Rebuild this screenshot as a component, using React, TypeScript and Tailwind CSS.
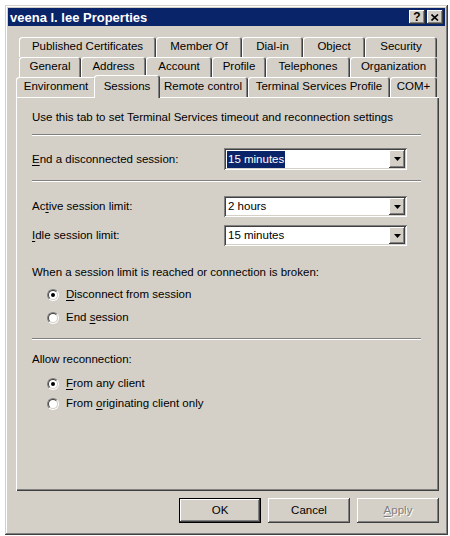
import React from 'react';

const raised =
  'shadow-[inset_-1px_-1px_#404040,inset_1px_1px_#ffffff,inset_-2px_-2px_#808080,inset_2px_2px_#d4d0c8]';
const sunken =
  'shadow-[inset_1px_1px_#808080,inset_-1px_-1px_#ffffff,inset_2px_2px_#404040,inset_-2px_-2px_#d4d0c8]';

interface TabDef {
  label: string;
  width: number;
  cls: string;
}

const row1: TabDef[] = [
  { label: 'Published Certificates', width: 137, cls: 'w-[137px]' },
  { label: 'Member Of', width: 86, cls: 'w-[86px]' },
  { label: 'Dial-in', width: 61, cls: 'w-[61px]' },
  { label: 'Object', width: 62, cls: 'w-[62px]' },
  { label: 'Security', width: 72, cls: 'w-[72px]' },
];

const row2: TabDef[] = [
  { label: 'General', width: 62, cls: 'w-[62px]' },
  { label: 'Address', width: 65, cls: 'w-[65px]' },
  { label: 'Account', width: 66, cls: 'w-[66px]' },
  { label: 'Profile', width: 54, cls: 'w-[54px]' },
  { label: 'Telephones', width: 84, cls: 'w-[84px]' },
  { label: 'Organization', width: 87, cls: 'w-[87px]' },
];

const Tab: React.FC<{ tab: TabDef }> = ({ tab }) => (
  <div
    className={`${tab.cls} h-[20px] flex items-center justify-center rounded-t-[3px] shadow-[inset_1px_1px_#ffffff,inset_-1px_0_#404040,inset_-2px_0_#808080] whitespace-nowrap`}
  >
    {tab.label}
  </div>
);

const Arrow = () => (
  <svg width="7" height="4" viewBox="0 0 7 4">
    <path d="M0 0h7L3.5 4z" fill="#000" />
  </svg>
);

const Combo: React.FC<{ value: string; selected?: boolean; h: string }> = ({ value, selected, h }) => (
  <div className={`w-[183px] ${h} bg-white ${sunken} flex items-center p-[2px]`}>
    <div className="flex-1 pl-[1px] flex items-center">
      <span className={selected ? 'bg-[#0a246a] text-white px-[1px] leading-[17px]' : 'px-[1px]'}>{value}</span>
    </div>
    <div className={`w-[16px] h-full bg-[#d4d0c8] ${raised} flex items-center justify-center`}>
      <Arrow />
    </div>
  </div>
);

const Radio: React.FC<{ checked?: boolean; children: React.ReactNode; mt: string }> = ({ checked, children, mt }) => (
  <div className={`flex items-center h-[16px] ${mt} pl-[15px]`}>
    <div className="w-[12px] h-[12px] rounded-full border border-t-[#808080] border-l-[#808080] border-b-white border-r-white">
      <div className="w-full h-full rounded-full border border-t-[#404040] border-l-[#404040] border-b-[#d4d0c8] border-r-[#d4d0c8] bg-white flex items-center justify-center">
        {checked && <div className="w-[4px] h-[4px] rounded-full bg-black" />}
      </div>
    </div>
    <span className="ml-[7px]">{children}</span>
  </div>
);

const Sep: React.FC<{ mt: string }> = ({ mt }) => (
  <div className={`${mt} w-[389px] h-[2px] border-t border-t-[#808080] border-b border-b-white`} />
);

const U: React.FC<{ children: React.ReactNode }> = ({ children }) => (
  <span className="underline underline-offset-[2px]">{children}</span>
);

export default function App() {
  return (
    <div
      className="bg-white pt-[5px] pl-[5px] h-[536px] text-[11.5px] text-black"
      style={{ fontFamily: '"Liberation Sans", Arial, sans-serif' }}
    >
      <div className="w-[443px] h-[530px] bg-[#d4d0c8] p-[3px] flex flex-col shadow-[inset_-1px_-1px_#404040,inset_1px_1px_#d4d0c8,inset_-2px_-2px_#808080,inset_2px_2px_#ffffff]">
        {/* title bar */}
        <div className="h-[18px] bg-[#0a246a] flex items-center justify-between pl-[2px] pr-[2px]">
          <span className="text-white font-bold text-[13px] leading-none">veena l. lee Properties</span>
          <div className="flex gap-[2px]">
            <div className={`w-[16px] h-[14px] bg-[#d4d0c8] ${raised} flex items-center justify-center font-bold text-[12px] leading-none pb-[1px]`}>
              ?
            </div>
            <div className={`w-[16px] h-[14px] bg-[#d4d0c8] ${raised} flex items-center justify-center`}>
              <svg width="8" height="7" viewBox="0 0 8 7">
                <path d="M0.5 0.5L7 6.5M7 0.5L0.5 6.5" stroke="#000" strokeWidth="1.6" />
              </svg>
            </div>
          </div>
        </div>

        {/* tab control */}
        <div className="mt-[11px] ml-[8px] w-[423px] flex flex-col">
          <div className="flex ml-[3px]">
            {row1.map((t) => (
              <Tab key={t.label} tab={t} />
            ))}
          </div>
          <div className="flex ml-[3px]">
            {row2.map((t) => (
              <Tab key={t.label} tab={t} />
            ))}
          </div>
          <div className="flex items-end h-[20px]">
            <Tab tab={{ label: 'Environment', width: 80, cls: 'w-[80px]' }} />
            <div className="relative z-10 w-[66px] h-[23px] -mx-[2px] -mb-[1px] bg-[#d4d0c8] rounded-t-[3px] shadow-[inset_1px_1px_#ffffff,inset_-1px_0_#404040,inset_-2px_0_#808080] flex justify-center pt-[3px]">
              Sessions
            </div>
            <Tab tab={{ label: 'Remote control', width: 90, cls: 'w-[90px]' }} />
            <Tab tab={{ label: 'Terminal Services Profile', width: 142, cls: 'w-[142px]' }} />
            <Tab tab={{ label: 'COM+', width: 47, cls: 'w-[47px]' }} />
          </div>

          {/* panel */}
          <div className="h-[394px] shadow-[inset_1px_1px_#ffffff,inset_-1px_-1px_#404040,inset_-2px_-2px_#808080] pl-[16px] pt-[1px] flex flex-col">
            <div className="mt-[12px] h-[16px] flex items-center">
              Use this tab to set Terminal Services timeout and reconnection settings
            </div>
            <Sep mt="mt-[8px]" />
            <div className="mt-[12px] flex items-center justify-between w-[375px]">
              <span className="mt-[2px]">
                <U>E</U>nd a disconnected session:
              </span>
              <Combo value="15 minutes" selected h="h-[22px]" />
            </div>
            <Sep mt="mt-[10px]" />
            <div className="mt-[14px] flex items-center justify-between w-[375px]">
              <span>
                Ac<U>t</U>ive session limit:
              </span>
              <Combo value="2 hours" h="h-[21px]" />
            </div>
            <div className="mt-[8px] flex items-center justify-between w-[375px]">
              <span>
                <U>I</U>dle session limit:
              </span>
              <Combo value="15 minutes" h="h-[21px]" />
            </div>
            <div className="mt-[19px] h-[16px] flex items-center">
              When a session limit is reached or connection is broken:
            </div>
            <Radio checked mt="mt-[6px]">
              <U>D</U>isconnect from session
            </Radio>
            <Radio mt="mt-[7px]">
              End <U>s</U>ession
            </Radio>
            <Sep mt="mt-[12px]" />
            <div className="mt-[12px] h-[16px] flex items-center">Allow reconnection:</div>
            <Radio checked mt="mt-[8px]">
              <U>F</U>rom any client
            </Radio>
            <Radio mt="mt-[4px]">
              From <U>o</U>riginating client only
            </Radio>
          </div>
        </div>

        {/* buttons */}
        <div className="mt-[7px] ml-[8px] w-[423px] flex justify-end gap-[7px]">
          <div className="w-[82px] h-[25px] border border-black">
            <div className={`w-full h-full ${raised} flex items-center justify-center`}>OK</div>
          </div>
          <div className={`w-[82px] h-[25px] ${raised} flex items-center justify-center`}>Cancel</div>
          <div
            className={`w-[82px] h-[25px] ${raised} flex items-center justify-center text-[#808080] [text-shadow:1px_1px_0_#ffffff]`}
          >
            <U>A</U>pply
          </div>
        </div>
      </div>
    </div>
  );
}
